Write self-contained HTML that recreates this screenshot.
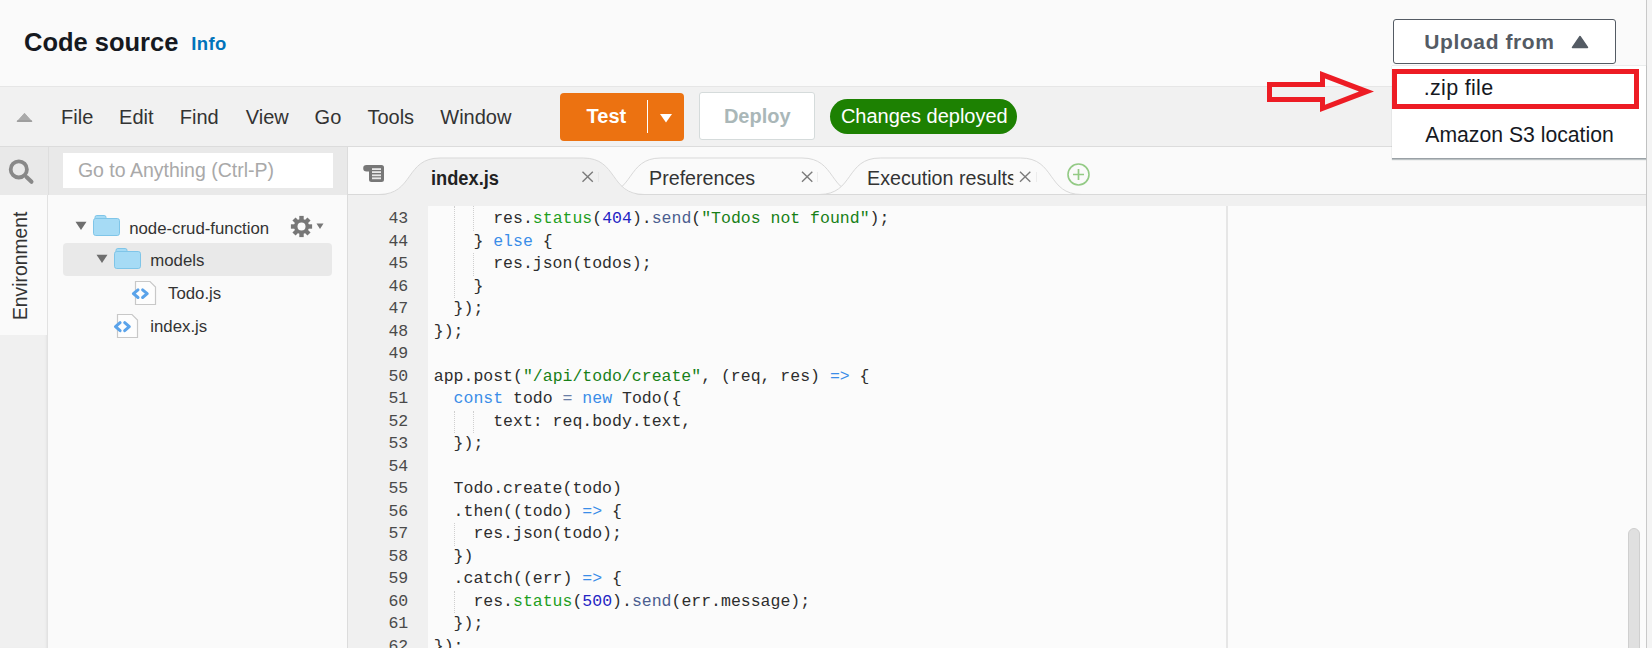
<!DOCTYPE html>
<html><head><meta charset="utf-8">
<style>
*{box-sizing:border-box;margin:0;padding:0}
html,body{width:1652px;height:648px;overflow:hidden;background:#fafafa;font-family:"Liberation Sans",sans-serif;position:relative}
.a{position:absolute;white-space:pre;line-height:1}
#hdr-title{left:23.6px;top:29.1px;font-size:26px;transform-origin:0 0;transform:scaleX(0.98);font-weight:bold;color:#16191f}
#hdr-info{left:191.3px;top:35.3px;font-size:18.5px;letter-spacing:0.4px;font-weight:bold;color:#0073bb}
#upl{left:1393px;top:19px;width:223px;height:45px;border:1px solid #545b64;border-radius:3px;background:#fff}
#rborder{left:1646px;top:0;width:1px;height:648px;background:#c9c9c9}
#rstrip{left:1647px;top:0;width:5px;height:648px;background:#f4f4f4}
#toolbar{left:0;top:86px;width:1646px;height:61px;background:#f1f1f1;border-top:1px solid #e6e6e6;border-bottom:1px solid #dcdcdc}
.menu{top:107.1px;font-size:20px;color:#333}
#testbtn{left:560px;top:93px;width:124px;height:47.5px;background:#ec7211;border-radius:4px}
#testdiv{left:647px;top:100px;width:1px;height:33px;background:#fff}
#deploy{left:699px;top:92px;width:116px;height:47.5px;background:#fff;border:1px solid #d5dbdb;border-radius:3px}
#pill{left:830px;top:99px;width:187px;height:35px;background:#1d8102;border-radius:18px}
#search{left:0;top:147px;width:347px;height:48px;background:#e9e9e9}
#searchsep{left:47.5px;top:147px;width:1px;height:48px;background:#dedede}
#sinput{left:63px;top:153px;width:270px;height:35px;background:#fff}
#leftcol{left:0;top:195px;width:48px;height:453px;background:#f0f0f0;border-right:1px solid #e2e2e2;box-shadow:inset -2px 0 2px -1px #e4e4e4}
#envtab{left:0;top:195px;width:48px;height:140px;background:#fafafa;border-right:1px solid #e2e2e2}
#tree{left:48px;top:195px;width:299px;height:453px;background:#fafafa}
#treeborder{left:347px;top:147px;width:1px;height:501px;background:#dcdcdc}
#sel{left:63px;top:243px;width:269px;height:33px;background:#e9e9e9;border-radius:4px}
.tt{font-size:16.8px;color:#333}
#tabbar{left:348px;top:147px;width:1298px;height:48px;background:#fafafa}
#band{left:348px;top:195px;width:1298px;height:11px;background:#f0f0f0}
#gutter{left:348px;top:206px;width:80px;height:442px;background:#f0f0f0}
#code{left:428px;top:206px;width:1218px;height:442px;background:#fbfbfb;border-top-left-radius:4px}
#margin{left:1226px;top:206px;width:2px;height:442px;background:#e6e6e6}
#scroll{left:1628px;top:528px;width:12px;height:140px;background:#e0e0e0;border:1px solid #cfcfcf;border-radius:6px}
.ln{position:absolute;left:348px;width:60.2px;text-align:right;font-family:"Liberation Mono",monospace;font-size:16.5px;line-height:22.5px;height:22.5px;color:#4a4a4a;white-space:pre}
.cl{position:absolute;left:433.8px;font-family:"Liberation Mono",monospace;font-size:16.5px;line-height:22.5px;height:22.5px;color:#2d2d2d;white-space:pre}
.g{color:#1f9f1f}.s{color:#178017}.n{color:#2424c4}.f{color:#4b5e8f}.k{color:#3a8de8}.o{color:#6a7ea6}
.guide{position:absolute;width:1px;border-left:1px dotted #cfcfcf}
#menu{left:1392px;top:65px;width:254px;height:94px;background:#fff;border-top:1px solid #eaeded;border-bottom:1px solid #9aa1a6;box-shadow:0 1px 1px rgba(0,28,36,.25)}
#redbox{left:1392px;top:69px;width:247px;height:40px;border:5px solid #ed1c24}
</style></head><body><domain style="display:none">Computer-Use</domain>
<div class="a" id="hdr-title">Code source</div>
<div class="a" id="hdr-info">Info</div>
<div class="a" id="upl"></div>
<div class="a" style="left:1424.3px;top:31.2px;font-size:21px;font-weight:bold;color:#545b64;letter-spacing:0.6px">Upload from</div>
<svg class="a" style="left:1570px;top:34px" width="20" height="16" viewBox="0 0 20 16"><path d="M10 2.5 L17.5 13.5 L2.5 13.5 Z" fill="#545b64" stroke="#545b64" stroke-width="1.5" stroke-linejoin="round"/></svg>

<div class="a" id="toolbar"></div>
<svg class="a" style="left:16px;top:112px" width="18" height="11" viewBox="0 0 18 11"><path d="M8.5 1.3 L15.6 9.2 L1.4 9.2 Z" fill="#aaa" stroke="#a6a6a6" stroke-width="0.8" stroke-linejoin="round"/><path d="M1.4 9.2 L15.6 9.2" stroke="#939393" stroke-width="1.2" stroke-linecap="round"/></svg>
<div class="a menu" style="left:61.1px">File</div>
<div class="a menu" style="left:119.1px">Edit</div>
<div class="a menu" style="left:179.8px">Find</div>
<div class="a menu" style="left:245.8px">View</div>
<div class="a menu" style="left:314.6px">Go</div>
<div class="a menu" style="left:367.4px">Tools</div>
<div class="a menu" style="left:440.3px">Window</div>
<div class="a" id="testbtn"></div>
<div class="a" id="testdiv"></div>
<div class="a" style="left:586.6px;top:106.4px;font-size:20px;font-weight:bold;color:#fff">Test</div>
<svg class="a" style="left:659px;top:113px" width="14" height="10" viewBox="0 0 14 10"><path d="M1 1 L13 1 L7 9.5 Z" fill="#fff"/></svg>
<div class="a" id="deploy"></div>
<div class="a" style="left:723.9px;top:106.4px;font-size:20px;font-weight:bold;color:#aab7b8">Deploy</div>
<div class="a" id="pill"></div>
<div class="a" style="left:840.9px;top:105.9px;font-size:20px;color:#fff">Changes deployed</div>

<div class="a" id="search"></div>
<div class="a" id="searchsep"></div>
<svg class="a" style="left:6px;top:157px" width="30" height="30" viewBox="0 0 30 30"><circle cx="12.8" cy="12.4" r="8.1" fill="none" stroke="#888" stroke-width="3.8"/><path d="M20.5 20 L25.5 24.8" stroke="#888" stroke-width="4" stroke-linecap="round"/></svg>
<div class="a" id="sinput"></div>
<div class="a" style="left:77.9px;top:161.3px;font-size:19.5px;color:#a9a9a9">Go to Anything (Ctrl-P)</div>

<div class="a" id="leftcol"></div>
<div class="a" id="envtab"></div>
<div class="a" style="left:10.5px;top:319.5px;font-size:19.3px;color:#333;transform-origin:0 0;transform:rotate(-90deg)">Environment</div>
<div class="a" id="tree"></div>
<div class="a" id="treeborder"></div>
<div class="a" id="sel"></div>
<!-- tree icons -->
<svg class="a" style="left:74px;top:220px" width="14" height="12" viewBox="0 0 14 12"><path d="M1.5 1.8 L12.5 1.8 L7 10 Z" fill="#6e6e6e"/></svg>
<svg class="a" style="left:92px;top:214px" width="29" height="23" viewBox="0 0 29 23"><rect x="3" y="1.5" width="11" height="5" rx="1.8" fill="#a6dbf5" stroke="#7fc5e8" stroke-width="1"/><rect x="1.5" y="4.5" width="26" height="17" rx="2.2" fill="#a6dbf5" stroke="#7fc5e8" stroke-width="1"/></svg>
<div class="a tt" style="left:129.2px;top:220.7px">node-crud-function</div>
<svg class="a" style="left:289px;top:214px" width="26" height="26" viewBox="0 0 26 26"><g transform="translate(12.5 12.5)" fill="#777"><circle r="7.6"/><rect x="-2.2" y="-10.6" width="4.4" height="21.2"/><rect x="-10.6" y="-2.2" width="21.2" height="4.4"/><rect x="-2.2" y="-10.6" width="4.4" height="21.2" transform="rotate(45)"/><rect x="-10.6" y="-2.2" width="21.2" height="4.4" transform="rotate(45)"/></g><circle cx="12.5" cy="12.5" r="4" fill="#fafafa"/></svg>
<svg class="a" style="left:315px;top:222px" width="10" height="8" viewBox="0 0 10 8"><path d="M1.5 1.5 L8.5 1.5 L5 7 Z" fill="#777"/></svg>
<svg class="a" style="left:95px;top:253px" width="14" height="12" viewBox="0 0 14 12"><path d="M1.5 1.8 L12.5 1.8 L7 10 Z" fill="#6e6e6e"/></svg>
<svg class="a" style="left:113px;top:247px" width="29" height="23" viewBox="0 0 29 23"><rect x="3" y="1.5" width="11" height="5" rx="1.8" fill="#a6dbf5" stroke="#7fc5e8" stroke-width="1"/><rect x="1.5" y="4.5" width="26" height="17" rx="2.2" fill="#a6dbf5" stroke="#7fc5e8" stroke-width="1"/></svg>
<div class="a tt" style="left:150.3px;top:253.2px">models</div>
<svg class="a" style="left:130px;top:280px" width="28" height="26" viewBox="0 0 28 26"><path d="M5.5 1.5 L20 1.5 L25.5 7 L25.5 24.5 L5.5 24.5 Z" fill="#fdfdfd" stroke="#c8c8c8" stroke-width="1.2"/><path d="M8 9.9 L3.4 13.7 L8 17.5 M12.6 9.9 L17.2 13.7 L12.6 17.5" stroke="#5aa3ea" stroke-width="3" fill="none" stroke-linecap="round" stroke-linejoin="round"/></svg>
<div class="a tt" style="left:168px;top:286.2px">Todo.js</div>
<svg class="a" style="left:112px;top:313px" width="28" height="26" viewBox="0 0 28 26"><path d="M5.5 1.5 L20 1.5 L25.5 7 L25.5 24.5 L5.5 24.5 Z" fill="#fdfdfd" stroke="#c8c8c8" stroke-width="1.2"/><path d="M8.1 9.7 L3.5 13.7 L8.1 17.7 M12.7 9.7 L17.3 13.7 L12.7 17.7" stroke="#5aa3ea" stroke-width="3" fill="none" stroke-linecap="round" stroke-linejoin="round"/></svg>
<div class="a tt" style="left:150.3px;top:319px">index.js</div>

<!-- tabs -->
<div class="a" id="tabbar"></div>
<svg class="a" id="tabsvg" style="left:348px;top:146px" width="1298" height="60" viewBox="348 146 1298 60">
<path d="M599.9 194.5 C634.9 194.5 625.9 158 660.9 158 L802.0 158 C837.0 158 828.0 194.5 863.0 194.5" fill="#fafafa" stroke="#d9d9d9" stroke-width="1"/>
<path d="M819.2 194.5 C854.2 194.5 845.2 158 880.2 158 L1020.7 158 C1055.7 158 1046.7 194.5 1081.7 194.5 Z" fill="#fafafa" stroke="none"/>
<path d="M819.2 194.5 C854.2 194.5 845.2 158 880.2 158 L1020.7 158 C1055.7 158 1046.7 194.5 1081.7 194.5" fill="none" stroke="#d9d9d9" stroke-width="1"/>
<line x1="348" y1="194.5" x2="1646" y2="194.5" stroke="#d9d9d9" stroke-width="1"/>
<path d="M379.0 195 C414.0 195 405.0 158 440.0 158 L583.2 158 C618.2 158 609.2 195 644.2 195 Z" fill="#f0f0f0" stroke="none"/>
<path d="M379.0 194.5 C414.0 194.5 405.0 158 440.0 158 L583.2 158 C618.2 158 609.2 194.5 644.2 194.5" fill="none" stroke="#d9d9d9" stroke-width="1"/>
<line x1="598.5" y1="172" x2="598.5" y2="182" stroke="#e6e6e6" stroke-width="1"/>
<line x1="817.5" y1="172" x2="817.5" y2="182" stroke="#ececec" stroke-width="1"/>
<line x1="1036.5" y1="172" x2="1036.5" y2="182" stroke="#ececec" stroke-width="1"/>
</svg>
<svg class="a" style="left:360px;top:162px" width="28" height="24" viewBox="0 0 28 24"><path d="M6.5 3 L21.5 3 Q24 3 24 5.5 L24 17.5 Q24 20 21.5 20 L11.5 20 Q9 20 9 17.5 L9 9.5 L6.5 9.5 Q3.2 9.5 3.2 6.2 Q3.2 3 6.5 3 Z" fill="#777"/><rect x="12" y="6.2" width="9" height="1.8" fill="#e8e8e8"/><rect x="12" y="9.2" width="9" height="1.8" fill="#e8e8e8"/><rect x="12" y="12.4" width="9" height="1.8" fill="#e8e8e8"/><rect x="12" y="15.4" width="9" height="1.8" fill="#e8e8e8"/></svg>
<div class="a" style="left:430.6px;top:168.2px;font-size:20.3px;font-weight:bold;color:#222;transform-origin:0 0;transform:scaleX(0.9)">index.js</div>
<svg class="a" style="left:580px;top:170px" width="16" height="14" viewBox="0 0 16 14"><path d="M2.5 1.8 L12.8 11.8 M12.8 1.8 L2.5 11.8" stroke="#7a7a7a" stroke-width="1.4"/></svg>
<div class="a" style="left:648.9px;top:167.9px;font-size:20.2px;transform-origin:0 0;transform:scaleX(0.975);color:#333">Preferences</div>
<svg class="a" style="left:800px;top:170px" width="16" height="14" viewBox="0 0 16 14"><path d="M2 1.8 L12.3 11.8 M12.3 1.8 L2 11.8" stroke="#7a7a7a" stroke-width="1.4"/></svg>
<div class="a" style="left:867.4px;top:167.9px;font-size:20.2px;transform-origin:0 0;transform:scaleX(0.975);color:#333;width:150px;overflow:hidden">Execution results</div>
<svg class="a" style="left:1018px;top:170px" width="16" height="14" viewBox="0 0 16 14"><path d="M2 1.8 L12.3 11.8 M12.3 1.8 L2 11.8" stroke="#7a7a7a" stroke-width="1.4"/></svg>
<svg class="a" style="left:1064px;top:160px" width="30" height="30" viewBox="0 0 30 30"><circle cx="14.5" cy="14.5" r="10.5" fill="none" stroke="#93ca85" stroke-width="1.6"/><path d="M9 14.5 L20 14.5 M14.5 9 L14.5 20" stroke="#93ca85" stroke-width="1.7"/></svg>

<div class="a" id="band"></div>
<div class="a" id="gutter"></div>
<div class="a" id="code"></div>
<div class="a" id="margin"></div>
<div class="a" id="scroll"></div>

<div id="codewrap"><div class="ln" style="top:208.15px">43</div>
<div class="cl" style="top:208.15px">      res.<span class="g">status</span>(<span class="n">404</span>).<span class="f">send</span>(<span class="s">"Todos not found"</span>);</div>
<div class="ln" style="top:230.65px">44</div>
<div class="cl" style="top:230.65px">    } <span class="k">else</span> {</div>
<div class="ln" style="top:253.15px">45</div>
<div class="cl" style="top:253.15px">      res.json(todos);</div>
<div class="ln" style="top:275.65px">46</div>
<div class="cl" style="top:275.65px">    }</div>
<div class="ln" style="top:298.15px">47</div>
<div class="cl" style="top:298.15px">  });</div>
<div class="ln" style="top:320.65px">48</div>
<div class="cl" style="top:320.65px">});</div>
<div class="ln" style="top:343.15px">49</div>
<div class="cl" style="top:343.15px"></div>
<div class="ln" style="top:365.65px">50</div>
<div class="cl" style="top:365.65px">app.post(<span class="s">"/api/todo/create"</span>, (req, res) <span class="k">=&gt;</span> {</div>
<div class="ln" style="top:388.15px">51</div>
<div class="cl" style="top:388.15px">  <span class="k">const</span> todo <span class="o">=</span> <span class="k">new</span> Todo({</div>
<div class="ln" style="top:410.65px">52</div>
<div class="cl" style="top:410.65px">      text: req.body.text,</div>
<div class="ln" style="top:433.15px">53</div>
<div class="cl" style="top:433.15px">  });</div>
<div class="ln" style="top:455.65px">54</div>
<div class="cl" style="top:455.65px"></div>
<div class="ln" style="top:478.15px">55</div>
<div class="cl" style="top:478.15px">  Todo.create(todo)</div>
<div class="ln" style="top:500.65px">56</div>
<div class="cl" style="top:500.65px">  .then((todo) <span class="k">=&gt;</span> {</div>
<div class="ln" style="top:523.15px">57</div>
<div class="cl" style="top:523.15px">    res.json(todo);</div>
<div class="ln" style="top:545.65px">58</div>
<div class="cl" style="top:545.65px">  })</div>
<div class="ln" style="top:568.15px">59</div>
<div class="cl" style="top:568.15px">  .catch((err) <span class="k">=&gt;</span> {</div>
<div class="ln" style="top:590.65px">60</div>
<div class="cl" style="top:590.65px">    res.<span class="g">status</span>(<span class="n">500</span>).<span class="f">send</span>(err.message);</div>
<div class="ln" style="top:613.15px">61</div>
<div class="cl" style="top:613.15px">  });</div>
<div class="ln" style="top:635.65px">62</div>
<div class="cl" style="top:635.65px">});</div>
<div class="guide" style="left:453.5px;top:206.00px;height:92.15px"></div>
<div class="guide" style="left:473px;top:206.00px;height:24.65px"></div>
<div class="guide" style="left:473px;top:253.15px;height:22.50px"></div>
<div class="guide" style="left:453.5px;top:410.65px;height:22.50px"></div>
<div class="guide" style="left:473px;top:410.65px;height:22.50px"></div>
<div class="guide" style="left:453.5px;top:523.15px;height:22.50px"></div>
<div class="guide" style="left:453.5px;top:590.65px;height:22.50px"></div></div><!--endcode-->

<div class="a" id="rborder"></div>
<div class="a" id="rstrip"></div>

<div class="a" id="menu"></div>
<div class="a" style="left:1423.8px;top:77.5px;font-size:21.5px;letter-spacing:0.3px;color:#16191f">.zip file</div>
<div class="a" style="left:1425.3px;top:123.9px;font-size:21.2px;color:#16191f">Amazon S3 location</div>
<div class="a" id="redbox"></div>
<svg class="a" style="left:1260px;top:65px" width="120" height="52" viewBox="1260 65 120 52"><path fill-rule="evenodd" fill="#ed1c24" d="M1267 82 L1320 82 L1320 71 L1374 91.5 L1320 112 L1320 102 L1267 102 Z M1272 87 L1325 87 L1325 78.5 L1359 91.5 L1325 104.8 L1325 97 L1272 97 Z"/></svg>
</body></html>
